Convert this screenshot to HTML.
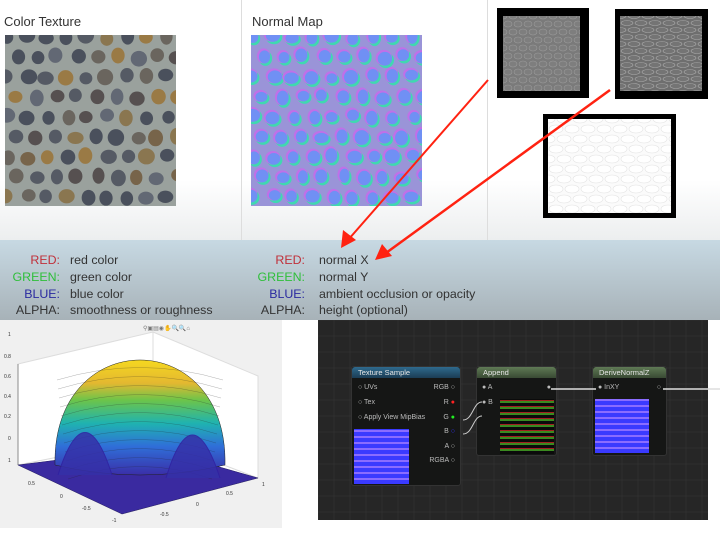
<!DOCTYPE html>
<html><head><meta charset="utf-8"><style>
*{margin:0;padding:0;box-sizing:border-box}
body{width:720px;height:540px;position:relative;overflow:hidden;background:#fff;font-family:"Liberation Sans",sans-serif}
.abs{position:absolute}
.top{left:0;top:0;width:720px;height:240px;background:linear-gradient(#fff 0,#fff 180px,#eceeef 240px)}
.title{font-size:13px;color:#333}
.band{left:0;top:240px;width:720px;height:80px;background:linear-gradient(#c7d9e3,#a7b2b8)}
.band div{position:absolute;font-size:12.4px;color:#333;white-space:nowrap}
.l{text-align:right;width:60px}
.node{position:absolute;background:#151615;border-radius:3px;border:1px solid #333;color:#ccc;font-size:7px}
.hd{height:11px;border-radius:3px 3px 0 0;padding:1px 0 0 6px;color:#e6e6e6;font-size:7.5px}
.pin{position:absolute;font-size:7px;color:#bbb}
</style></head><body>
<div class="abs top"></div>
<div class="abs" style="left:241px;top:0;width:1px;height:240px;background:#ddd"></div>
<div class="abs" style="left:487px;top:0;width:1px;height:240px;background:#ddd"></div>
<div class="abs title" style="left:4px;top:14px">Color Texture</div>
<div class="abs title" style="left:252px;top:14px">Normal Map</div>
<svg class="abs" style="left:5px;top:35px" width="171" height="171" id="ct"><rect width="171" height="171" fill="#9aa19d"/></svg>
<svg class="abs" style="left:251px;top:35px" width="171" height="171" id="nm"><rect width="171" height="171" fill="#9a94d8"/></svg>
<div class="abs" style="left:497px;top:8px;width:92px;height:90px;background:#000"></div>
<svg class="abs" style="left:503px;top:16px" width="77" height="75" id="g1"><rect width="77" height="75" fill="#7a7a7a"/></svg>
<div class="abs" style="left:615px;top:9px;width:93px;height:90px;background:#000"></div>
<svg class="abs" style="left:620px;top:16px" width="82" height="75" id="g2"><rect width="82" height="75" fill="#6e6e6e"/></svg>
<div class="abs" style="left:543px;top:114px;width:133px;height:104px;background:#000"></div>
<svg class="abs" style="left:548px;top:119px" width="123" height="94" id="g3"><rect width="123" height="94" fill="#fbfbfb"/></svg>

<div class="abs band">
<div class="l" style="left:0;top:13px;color:#c0303a">RED:</div><div style="left:70px;top:13px">red color</div>
<div class="l" style="left:0;top:30px;color:#2fbf3a">GREEN:</div><div style="left:70px;top:30px">green color</div>
<div class="l" style="left:0;top:47px;color:#2a2aa0">BLUE:</div><div style="left:70px;top:47px">blue color</div>
<div class="l" style="left:0;top:63px">ALPHA:</div><div style="left:70px;top:63px">smoothness or roughness</div>
<div class="l" style="left:245px;top:13px;color:#c0303a">RED:</div><div style="left:319px;top:13px">normal X</div>
<div class="l" style="left:245px;top:30px;color:#2fbf3a">GREEN:</div><div style="left:319px;top:30px">normal Y</div>
<div class="l" style="left:245px;top:47px;color:#2a2aa0">BLUE:</div><div style="left:319px;top:47px">ambient occlusion or opacity</div>
<div class="l" style="left:245px;top:63px">ALPHA:</div><div style="left:319px;top:63px">height (optional)</div>
</div>

<!-- plot -->
<svg class="abs" style="left:0;top:320px" width="282" height="208">
<rect width="282" height="208" fill="#f0f0f0"/>
<polygon points="18,145 153,118 258,158 122,194" fill="#fff" stroke="#ddd"/>
<polygon points="18,44 153,12 153,118 18,145" fill="#fff" stroke="#ddd"/>
<polygon points="153,12 258,56 258,158 153,118" fill="#fff" stroke="#ddd"/>
<line x1="18" y1="44" x2="18" y2="145" stroke="#555" stroke-width=".6"/>
<polygon points="18,145 153,128 258,158 122,194" fill="#3a2aa0" stroke="#221a60" stroke-width=".5"/>
<defs><linearGradient id="dg" x1="0" y1="1" x2="0" y2="0"><stop offset="0" stop-color="#3a2ea8"/><stop offset=".25" stop-color="#2f6fd8"/><stop offset=".45" stop-color="#1fb3b0"/><stop offset=".65" stop-color="#6cc44a"/><stop offset=".8" stop-color="#e4b830"/><stop offset="1" stop-color="#f5d820"/></linearGradient></defs>
<path d="M55,145 C52,5 228,5 225,145 Q140,165 55,145Z" fill="url(#dg)" stroke="#222" stroke-width=".5"/>
<g stroke="#222" stroke-width=".3" fill="none" opacity=".6" id="dl"></g>
<path d="M58,155 Q85,70 112,155 M166,158 Q192,72 220,158" stroke="#3020a0" fill="#3530a8" opacity=".85"/>
<g font-size="5" fill="#333"><text x="8" y="16">1</text><text x="4" y="38">0.8</text><text x="4" y="58">0.6</text><text x="4" y="78">0.4</text><text x="4" y="98">0.2</text><text x="8" y="120">0</text><text x="8" y="142">1</text><text x="28" y="165">0.5</text><text x="60" y="178">0</text><text x="82" y="190">-0.5</text><text x="112" y="202">-1</text><text x="262" y="166">1</text><text x="226" y="175">0.5</text><text x="196" y="186">0</text><text x="160" y="196">-0.5</text></g>
<text x="143" y="10" font-size="6" fill="#777">⚲▣▤◉✋🔍🔍⌂</text>
</svg>

<!-- node graph -->
<svg class="abs" style="left:318px;top:320px" width="390" height="200" id="grid"><rect width="390" height="200" fill="#262626"/></svg>
<div class="node" style="left:351px;top:366px;width:110px;height:120px">
<div class="hd" style="background:linear-gradient(#2f6a8e,#1b3d55)">Texture Sample</div>
<div class="pin" style="left:6px;top:17px">○ UVs</div><div class="pin" style="left:6px;top:32px">○ Tex</div><div class="pin" style="left:6px;top:47px">○ Apply View MipBias</div>
<div class="pin" style="right:5px;top:17px">RGB ○</div><div class="pin" style="right:5px;top:32px">R <span style="color:#f22">●</span></div><div class="pin" style="right:5px;top:47px">G <span style="color:#2e2">●</span></div><div class="pin" style="right:5px;top:61px">B <span style="color:#33f">○</span></div><div class="pin" style="right:5px;top:76px">A ○</div><div class="pin" style="right:5px;top:90px">RGBA ○</div>
<div style="position:absolute;left:2px;top:62px;width:55px;height:55px;background:repeating-linear-gradient(0deg,#3a3aff 0 4px,#8a6cff 4px 6px)"></div>
</div>
<div class="node" style="left:476px;top:366px;width:81px;height:90px">
<div class="hd" style="background:linear-gradient(#5f7a55,#394a33)">Append</div>
<div class="pin" style="left:5px;top:17px">● A</div><div class="pin" style="left:5px;top:32px">● B</div><div class="pin" style="right:5px;top:17px">●</div>
<div style="position:absolute;left:23px;top:32px;width:54px;height:55px;background:repeating-linear-gradient(0deg,#0b0b0b 0 3px,#3a8a20 3px 5px,#a02020 5px 6px)"></div>
</div>
<div class="node" style="left:592px;top:366px;width:75px;height:90px">
<div class="hd" style="background:linear-gradient(#5f7a55,#394a33)">DeriveNormalZ</div>
<div class="pin" style="left:5px;top:17px">● InXY</div><div class="pin" style="right:5px;top:17px">○</div>
<div style="position:absolute;left:2px;top:32px;width:54px;height:54px;background:repeating-linear-gradient(0deg,#3a3aff 0 4px,#8a6cff 4px 6px)"></div>
</div>
<svg class="abs" style="left:318px;top:320px" width="402" height="200" pointer-events="none">
<path d="M145,100 C155,100 155,82 164,82 M145,114 C155,114 155,96 164,96" stroke="#ccc" fill="none" stroke-width="1"/>
<line x1="233" y1="69" x2="278" y2="69" stroke="#ddd" stroke-width="1.5"/>
<line x1="345" y1="69" x2="402" y2="69" stroke="#ddd" stroke-width="1.5"/>
</svg>

<!-- arrows -->
<svg class="abs" style="left:0;top:0" width="720" height="540">
<line x1="488" y1="80" x2="348" y2="240" stroke="#f21" stroke-width="2"/>
<polygon points="341,248 343,230 356,240" fill="#f21"/>
<line x1="610" y1="90" x2="386" y2="253" stroke="#f21" stroke-width="2.5"/>
<polygon points="375,260 382,244 392,256" fill="#f21"/>
</svg>
<script>
var ns="http://www.w3.org/2000/svg";
function el(p,t,a){var e=document.createElementNS(ns,t);for(var k in a)e.setAttribute(k,a[k]);p.appendChild(e);return e;}
var s=7;function r(){s=(s*9301+49297)%233280;return s/233280;}
var ct=document.getElementById('ct'),nm=document.getElementById('nm');
var cc=['#555a64','#6a655e','#77644a','#4a505c','#8a7650','#626874','#9a7a45','#565050'];
for(var y=0;y<9;y++)for(var x=0;x<9;x++){var cx=x*20+(y%2)*10+r()*4,cy=y*20+r()*4,rx=6+r()*2.5,ry=6+r()*2.5;
el(ct,'ellipse',{cx:cx,cy:cy,rx:rx,ry:ry,fill:cc[Math.floor(r()*cc.length)]});
el(nm,'ellipse',{cx:cx+1,cy:cy+1.5,rx:rx,ry:ry,fill:'#40d8b0'});
el(nm,'ellipse',{cx:cx-1,cy:cy-1,rx:rx,ry:ry,fill:'#c070e8'});
el(nm,'ellipse',{cx:cx,cy:cy,rx:rx-1,ry:ry-1,fill:'#7090f4'});}
function tile(id,w,h,ex,ey,f,st){var g=document.getElementById(id);for(var y=0;y*ey<h+ey;y++)for(var x=-1;x*ex<w+ex;x++)el(g,'ellipse',{cx:x*ex+(y%2)*ex/2,cy:y*ey,rx:ex/2-1,ry:ey/2-1,fill:f,stroke:st,'stroke-width':.6});}
tile('g1',77,75,10,8,'#7e7e7e','#9a9a9a');tile('g2',82,75,14,7,'#747474','#aaa');tile('g3',123,94,16,10,'#fff','#e2e2e2');
var gr=document.getElementById('grid');for(var i=0;i<390;i+=16)el(gr,'line',{x1:i,y1:0,x2:i,y2:200,stroke:'#2f2f2f'});
for(var j=0;j<200;j+=16)el(gr,'line',{x1:0,y1:j,x2:390,y2:j,stroke:'#2f2f2f'});
var dl=document.getElementById('dl');for(var k=0;k<12;k++){var yy=40+k*9;el(dl,'path',{d:'M'+(57+k*1)+','+(yy+20)+' Q140,'+(yy-5)+' '+(223-k)+','+(yy+20)});}
</script>
</body></html>
